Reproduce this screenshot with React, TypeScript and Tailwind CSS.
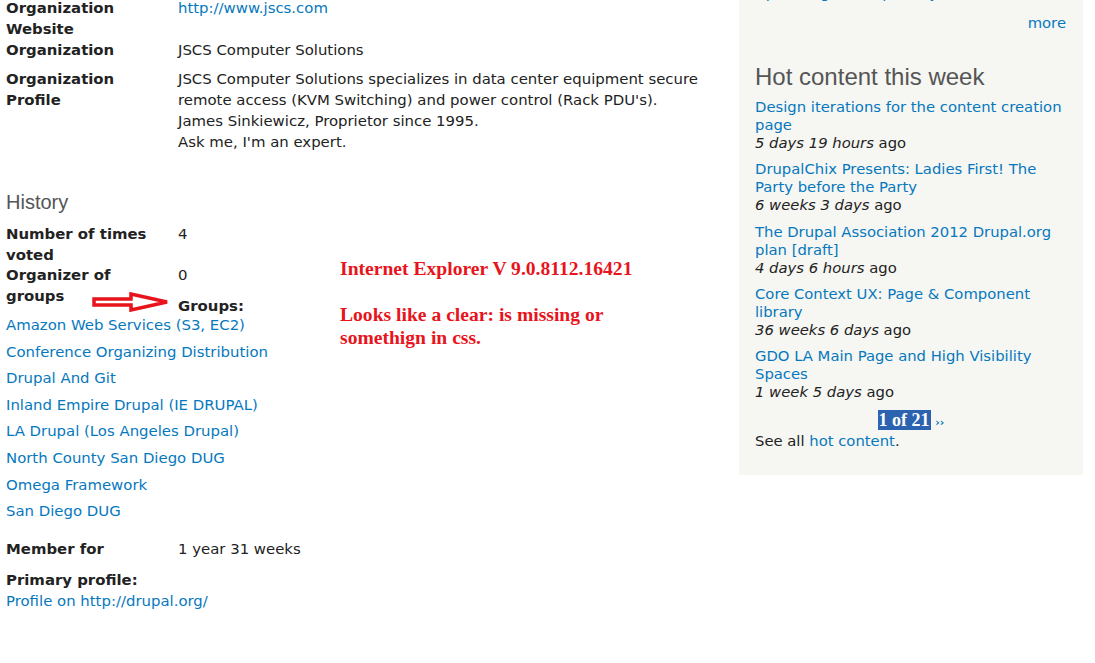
const groups = [
  "Amazon Web Services (S3, EC2)",
  "Conference Organizing Distribution",
  "Drupal And Git",
  "Inland Empire Drupal (IE DRUPAL)",
  "LA Drupal (Los Angeles Drupal)",
  "North County San Diego DUG",
  "Omega Framework",
  "San Diego DUG",
];

const hot = [
  { title: "Design iterations for the content creation page", when: "5 days 19 hours" },
  { title: "DrupalChix Presents: Ladies First! The Party before the Party", when: "6 weeks 3 days" },
  { title: "The Drupal Association 2012 Drupal.org plan [draft]", when: "4 days 6 hours" },
  { title: "Core Context UX: Page & Component library", when: "36 weeks 6 days" },
  { title: "GDO LA Main Page and High Visibility Spaces", when: "1 week 5 days" },
];

function Row({ label, children, className = "" }: { label: React.ReactNode; children?: React.ReactNode; className?: string }) {
  return (
    <div className={`grid grid-cols-[172px_1fr] ${className}`}>
      <div className="font-bold">{label}</div>
      <div>{children}</div>
    </div>
  );
}

function Arrow() {
  return (
    <svg width="80" height="20" viewBox="0 0 80 20" className="absolute left-[91px] top-[294px]">
      <path d="M3 7 H40 V2 L76 10 L40 18 V13 H3 Z" fill="none" stroke="#e8141c" strokeWidth="3.5" strokeLinejoin="miter" />
    </svg>
  );
}

export default function App() {
  return (
    <div className="w-[1095px] h-[663px] overflow-hidden bg-white text-[#222] font-['DejaVu_Sans',Verdana,sans-serif] text-[14.9px] leading-[21px] flex">
      <div className="relative w-[739px] pl-[6px] -mt-[2px]">
        <div className="w-[710px]">
          <Row label={<>Organization<br />Website</>}>
            <a className="text-[#0678be]">http://www.jscs.com</a>
          </Row>
          <Row label="Organization">JSCS Computer Solutions</Row>
          <Row label={<>Organization<br />Profile</>} className="mt-[8px]">
            JSCS Computer Solutions specializes in data center equipment secure remote access (KVM Switching) and power control (Rack PDU's).
            <br />James Sinkiewicz, Proprietor since 1995.
            <br />Ask me, I'm an expert.
          </Row>
        </div>

        <h2 className="mt-[36px] font-['Liberation_Sans',Arial,sans-serif] text-[20px] leading-[26px] text-[#555]">History</h2>
        <Row label={<>Number of times<br />voted</>} className="mt-[9px]">4</Row>
        <Row label={<>Organizer of<br />groups</>} className="-mt-[1px]">0</Row>
        <div className="pl-[172px] -mt-[11px] font-bold">Groups:</div>
        <div className="flex flex-col gap-[5.6px] -mt-[2px]">
          {groups.map((g) => (
            <a key={g} className="text-[#0678be]">{g}</a>
          ))}
        </div>
        <Row label="Member for" className="mt-[17px]">1 year 31 weeks</Row>
        <div className="mt-[10px] font-bold">Primary profile:</div>
        <a className="text-[#0678be]">Profile on http://drupal.org/</a>

        <Arrow />
        <div className="absolute left-[340px] top-[259px] text-[#e8141c] font-['Liberation_Serif','Times_New_Roman',serif] font-bold text-[19.6px] leading-[23px]">
          <div>Internet Explorer V 9.0.8112.16421</div>
          <div className="mt-[23px]">Looks like a clear: is missing or</div>
          <div>somethign in css.</div>
        </div>
      </div>

      <div className="w-[344px] h-[475px] bg-[#f6f6f2] px-[16px] text-[14.8px] leading-[18px]">
        <div className="-mt-[16px] text-[#0678be]">Upcoming meetup today</div>
        <div className="text-right text-[#0678be] mt-[12px] pr-[1px]">more</div>
        <h2 className="mt-[31px] font-['Liberation_Sans',Arial,sans-serif] text-[24px] leading-[28px] text-[#555]">Hot content this week</h2>
        <div className="mt-[7px] flex flex-col gap-[8.25px]">
          {hot.map((h) => (
            <div key={h.title}>
              <a className="text-[#0678be]">{h.title}</a>
              <div>
                <em>{h.when}</em> ago
              </div>
            </div>
          ))}
        </div>
        <div className="mt-[10px] text-center leading-[18px]">
          <span className="bg-[#2c63b0] text-white font-bold font-['Liberation_Serif',serif] text-[18px] px-[1px]">1 of 21</span>{" "}
          <a className="text-[#0678be] text-[11px] font-bold">››</a>
        </div>
        <div>
          See all <a className="text-[#0678be]">hot content</a>.
        </div>
      </div>
    </div>
  );
}
